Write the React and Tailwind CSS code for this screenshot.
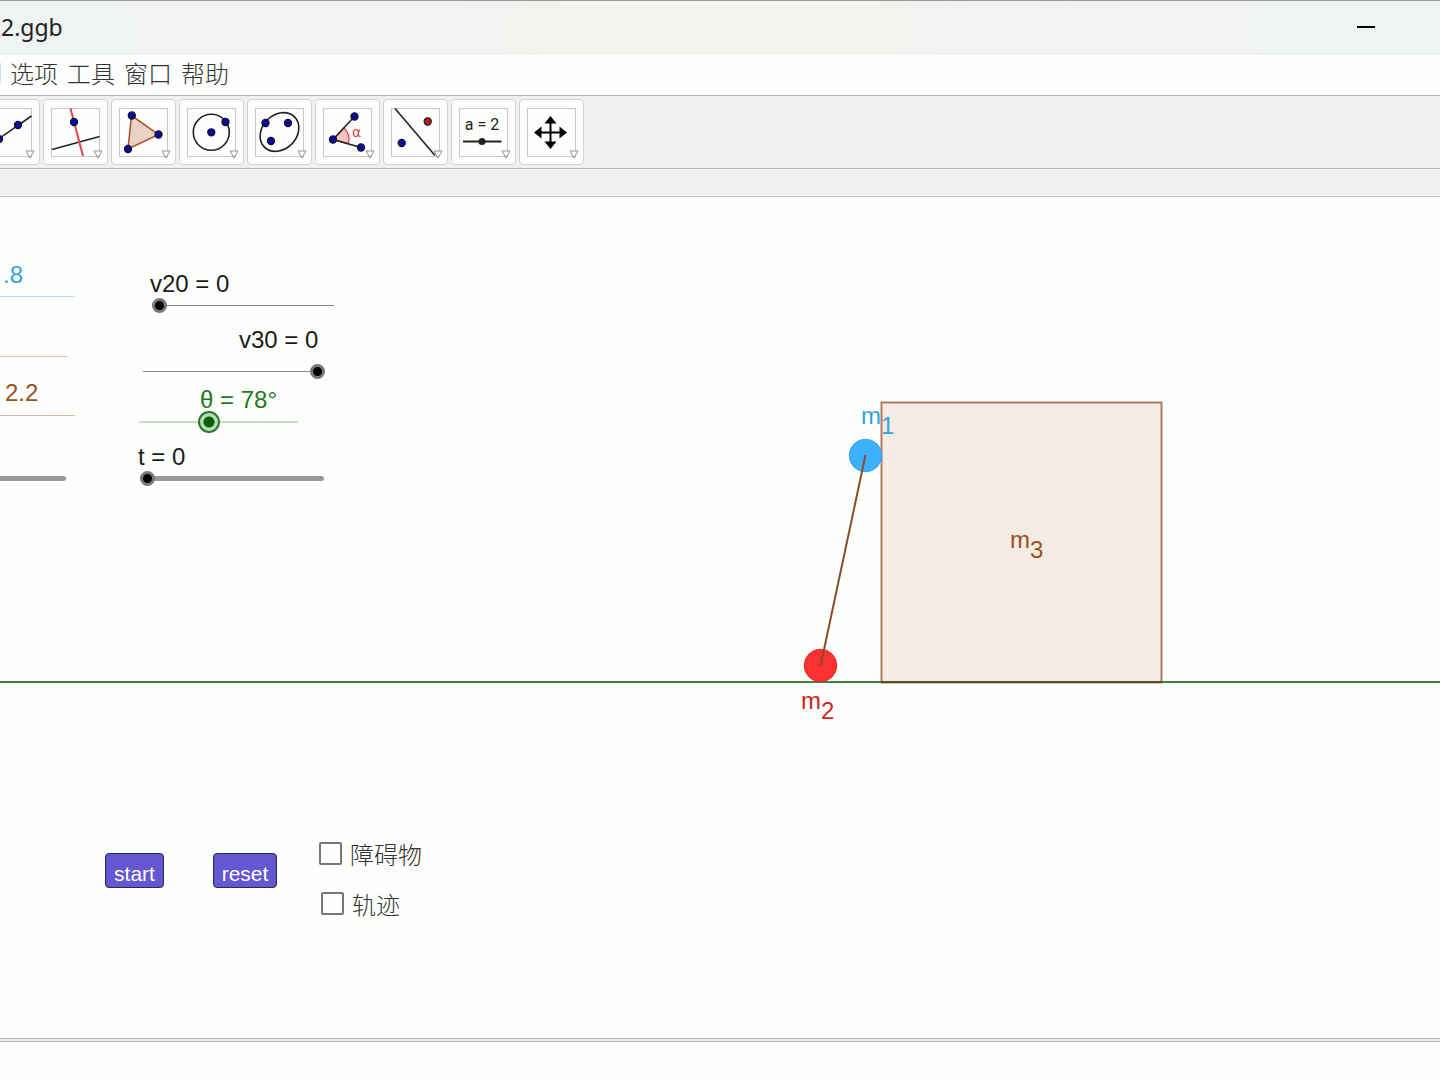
import { useState } from 'react';

const MENUS = ['选项', '工具', '窗口', '帮助'];

function Dot({ x, y, fill = '#0a0a9c' }) {
    return <circle cx={x} cy={y} r="3.6" fill={fill} stroke="#10102a" strokeWidth="1.1" />;
}

const TOOLS = [
    {
        name: '直线',
        icon: (
            <>
                <path d="M9 50 L56.5 17" stroke="#222" strokeWidth="1.6" />
                <Dot x={24} y={40} />
                <Dot x={43} y={26} />
            </>
        ),
    },
    {
        name: '垂线',
        icon: (
            <>
                <path d="M9 50.5 L56.5 37.5" stroke="#222" strokeWidth="1.6" />
                <path d="M27.5 9.5 L40 57" stroke="#e0474c" strokeWidth="2" />
                <Dot x={31} y={23} />
            </>
        ),
    },
    {
        name: '多边形',
        icon: (
            <>
                <path d="M20.5 16.5 L47.5 35.5 L17 50 Z" fill="#e9d3c6" stroke="#a85a30" strokeWidth="1.6" />
                <Dot x={20.8} y={16.5} />
                <Dot x={47.5} y={35.5} />
                <Dot x={17} y={50} />
            </>
        ),
    },
    {
        name: '圆',
        icon: (
            <>
                <circle cx="32.3" cy="33.3" r="18" stroke="#222" strokeWidth="1.6" />
                <Dot x={32.3} y={33.3} />
                <Dot x={46.5} y={23} />
            </>
        ),
    },
    {
        name: '椭圆',
        icon: (
            <>
                <ellipse cx="32.5" cy="33" rx="21.3" ry="17.2" transform="rotate(-45 32.5 33)" stroke="#222" strokeWidth="1.6" />
                <Dot x={18.5} y={24} />
                <Dot x={41} y={24} />
                <Dot x={24} y={42} />
            </>
        ),
    },
    {
        name: '角度',
        icon: (
            <>
                <path d="M18 40.5 L29 29 A16 16 0 0 1 33.5 44.5 Z" fill="#fbc4c4" stroke="#e0474c" strokeWidth="1.2" />
                <path d="M39.5 17.5 L18 40.5 L46 48.5" stroke="#222" strokeWidth="1.6" />
                <Dot x={18} y={40.5} />
                <Dot x={39.5} y={17.5} />
                <Dot x={46} y={48.5} />
                <text x="37" y="38" fontSize="14" fill="#e0474c" className="font-['DejaVu_Sans',sans-serif]">α</text>
            </>
        ),
    },
    {
        name: '轴对称',
        icon: (
            <>
                <path d="M12 9.5 L52 56.5" stroke="#222" strokeWidth="1.6" />
                <Dot x={18.7} y={44} />
                <Dot x={44.7} y={22.5} fill="#c01818" />
            </>
        ),
    },
    {
        name: '滑动条',
        icon: (
            <>
                <text x="31" y="31" fontSize="16" textAnchor="middle" fill="#222" className="font-[Roboto,sans-serif]">a = 2</text>
                <path d="M12 42.5 H50.5" stroke="#222" strokeWidth="1.8" />
                <circle cx="31" cy="42.5" r="3.5" fill="#222" />
            </>
        ),
    },
    {
        name: '移动视图',
        icon: (
            <>
                <path d="M31.5 22 V45 M20 33.5 H43" stroke="#000" strokeWidth="2" />
                <path d="M31.5 17 L37.5 24.5 H25.5 Z M31.5 50 L37.5 42.5 H25.5 Z M15 33.5 L22.5 27.5 V39.5 Z M48 33.5 L40.5 27.5 V39.5 Z" fill="#000" />
            </>
        ),
    },
];

function ToolButton({ name, icon }) {
    return (
        <button aria-label={name} className="h-[66px] w-[65px] shrink-0 rounded-sm border border-[#d2d3d2] bg-[#fdfffd]">
            <svg viewBox="0 1 65 65" fill="none" className="-m-px block size-[65px]">
                <rect x="8.5" y="9.5" width="48" height="48" stroke="#c6c7c6" />
                {icon}
                <path d="M51 52 H59 L55 59 Z" fill="#fdfffd" stroke="#8c8c8c" strokeWidth="1" />
            </svg>
        </button>
    );
}

const range = 'absolute h-6 cursor-pointer appearance-none bg-transparent [&::-webkit-slider-thumb]:appearance-none [&::-webkit-slider-thumb]:box-border [&::-webkit-slider-thumb]:rounded-full';
const thin = '[&::-webkit-slider-runnable-track]:h-px [&::-webkit-slider-thumb]:-mt-[7px]';
const thick = '[&::-webkit-slider-runnable-track]:h-[5px] [&::-webkit-slider-runnable-track]:rounded-full [&::-webkit-slider-runnable-track]:bg-[#999] [&::-webkit-slider-thumb]:-mt-[5px]';
const darkThumb = '[&::-webkit-slider-thumb]:size-[15px] [&::-webkit-slider-thumb]:border-[3px] [&::-webkit-slider-thumb]:border-[#777] [&::-webkit-slider-thumb]:bg-black';
const greenThumb = '[&::-webkit-slider-thumb]:size-[22px] [&::-webkit-slider-thumb]:border-2 [&::-webkit-slider-thumb]:border-[#2c7a2c] [&::-webkit-slider-thumb]:bg-[radial-gradient(circle,#066006_5px,#b9dcb9_6px)]';

// Sliders sit on the free drawing surface, each with its label
const SLIDERS = [
    { id: 'm1', text: '.8', min: 0, max: 10, value: 1.8, label: 'left-[3px] top-[62px] text-[#35a3dc]', input: `-left-[125px] top-[87px] w-[200px] ${thin} ${darkThumb} [&::-webkit-slider-runnable-track]:bg-[#b9dcf0]` },
    { id: 'm2', text: '', min: 0, max: 10, value: 1, label: 'left-0 top-[121px]', input: `-left-[132px] top-[147px] w-[200px] ${thin} ${darkThumb} [&::-webkit-slider-runnable-track]:bg-[#e6bdb5]` },
    { id: 'm3', text: '2.2', min: 0, max: 10, value: 2.2, label: 'left-[5px] top-[180px] text-[#99501f]', input: `-left-[125px] top-[206px] w-[200px] ${thin} ${darkThumb} [&::-webkit-slider-runnable-track]:bg-[#dbbba8]` },
    { id: 'l', text: '', min: 0, max: 10, value: 2, label: 'left-0 top-[243px]', input: `-left-[134px] top-[269px] w-[200px] ${thick} ${darkThumb}` },
    { id: 'v20', text: 'v20 = 0', min: 0, max: 10, value: 0, label: 'left-[150px] top-[71px] text-[#1a1a1a]', input: `left-[152px] top-[96px] w-[182px] ${thin} ${darkThumb} [&::-webkit-slider-runnable-track]:bg-[#888]` },
    { id: 'v30', text: 'v30 = 0', min: -10, max: 0, value: 0, label: 'left-[239px] top-[127px] text-[#1a1a1a]', input: `left-[143px] top-[162px] w-[182px] ${thin} ${darkThumb} [&::-webkit-slider-runnable-track]:bg-[#888]` },
    { id: 'theta', text: 'θ = 78°', min: 0, max: 180, value: 78, label: 'left-[200px] top-[187px] text-[#1e7a1e]', input: `left-[139px] top-[213px] w-[159px] ${greenThumb} [&::-webkit-slider-runnable-track]:h-0.5 [&::-webkit-slider-runnable-track]:bg-[#c5dcc5] [&::-webkit-slider-thumb]:-mt-[10px]` },
    { id: 't', text: 't = 0', min: 0, max: 10, value: 0, label: 'left-[138px] top-[244px] text-[#1a1a1a]', input: `left-[140px] top-[269px] w-[184px] ${thick} ${darkThumb}` },
];

function Slider({ id, text, min, max, value, label, input }) {
    return (
        <>
            {text && <label htmlFor={id} className={`absolute text-2xl leading-8 whitespace-pre ${label}`}>{text}</label>}
            <input id={id} type="range" aria-label={id} min={min} max={max} step="0.1" defaultValue={value} className={`${range} ${input}`} />
        </>
    );
}

function Check({ text, place }) {
    const [on, setOn] = useState(false);

    return (
        <label className={`absolute flex items-center gap-2 text-2xl leading-8 font-light text-[#333] font-['Noto_Sans_CJK_SC',sans-serif] ${place}`}>
            <input
                type="checkbox"
                checked={on}
                onChange={() => setOn(!on)}
                className="mb-px size-[23px] appearance-none rounded-xs border-2 border-[#777] checked:bg-[#6557d2]"
            />
            {text}
        </label>
    );
}

function Scene() {
    return (
        <svg className="absolute inset-0 h-full w-full text-2xl" fill="none">
            <rect x="881.5" y="205.5" width="280" height="280" fill="#f4ebe5" stroke="#b27a5c" strokeWidth="2" />
            <line x1="0" y1="485" x2="100%" y2="485" stroke="#3c843c" strokeWidth="2" />
            <line x1="881" y1="485" x2="1162" y2="485" stroke="#4e5520" strokeWidth="2" />
            <circle cx="865.5" cy="258.5" r="16.3" fill="#3db1fc" stroke="#35a3ea" />
            <circle cx="820.5" cy="468.5" r="16.3" fill="#fc3232" stroke="#e22b2b" />
            <line x1="865.5" y1="258" x2="820.5" y2="469" stroke="#8a4c2a" strokeWidth="2" />
            <text x="861" y="227" fill="#35a3dc">m<tspan dy="10">1</tspan></text>
            <text x="801" y="512" fill="#cf1f24">m<tspan dy="10">2</tspan></text>
            <text x="1010" y="351" fill="#99501f">m<tspan dy="10">3</tspan></text>
        </svg>
    );
}

const action = 'absolute flex h-[35px] items-end justify-center rounded-sm border border-[#2c2a50] bg-[#6557d2] text-[21px] leading-[26px] text-white';

export default function App() {
    return (
        <div className="flex min-h-screen flex-col overflow-hidden bg-[#fdfffd] font-['Liberation_Sans',Arial,sans-serif]">
            {/* Title bar */}
            <header className="flex h-[55px] items-center justify-between border-t border-[#999] bg-linear-to-r from-[#eff3f3] via-[#f4f3ef] to-[#eff3f4]">
                <h1 className="-ml-[22px] pb-0.5 text-[23px] leading-8 text-[#222] font-['Noto_Sans','Noto_Sans_CJK_SC',sans-serif]">型2.ggb</h1>
                <button aria-label="最小化" className="mr-[51px] flex h-8 w-[46px] items-center justify-center pb-0.5">
                    <span className="h-0.5 w-[18px] bg-black" />
                </button>
            </header>

            {/* Menu bar */}
            <nav className="flex h-10 items-center gap-[9px] pb-1 text-2xl leading-8 font-light text-[#333] font-['Noto_Sans_CJK_SC',sans-serif]">
                <span className="h-5 w-px bg-[#d5dde4]" />
                {MENUS.map((menu) => (
                    <button key={menu}>{menu}</button>
                ))}
            </nav>

            {/* Toolbar */}
            <div className="border-y border-[#b5b7b5] bg-[#eff0ef]">
                <div className="-ml-[25px] flex h-[72px] items-center gap-[3px]">
                    {TOOLS.map((tool) => (
                        <ToolButton key={tool.name} {...tool} />
                    ))}
                </div>
            </div>
            <div className="h-7 border-b border-[#c4c5c4] bg-[#eff0ef]" />

            {/* Graphics view */}
            <main className="relative flex-1 overflow-hidden">
                <Scene />
                {SLIDERS.map((slider) => (
                    <Slider key={slider.id} {...slider} />
                ))}
                <button className={`${action} left-[105px] top-[656px] w-[59px]`}>start</button>
                <button className={`${action} left-[213px] top-[656px] w-[64px]`}>reset</button>
                <Check text="障碍物" place="left-[319px] top-[641px]" />
                <Check text="轨迹" place="left-[321px] top-[691px]" />
            </main>

            <div className="h-1 border-y border-[#b9bab9] bg-[#e8e9e8]" />
            <footer className="h-[38px]" />
        </div>
    );
}
